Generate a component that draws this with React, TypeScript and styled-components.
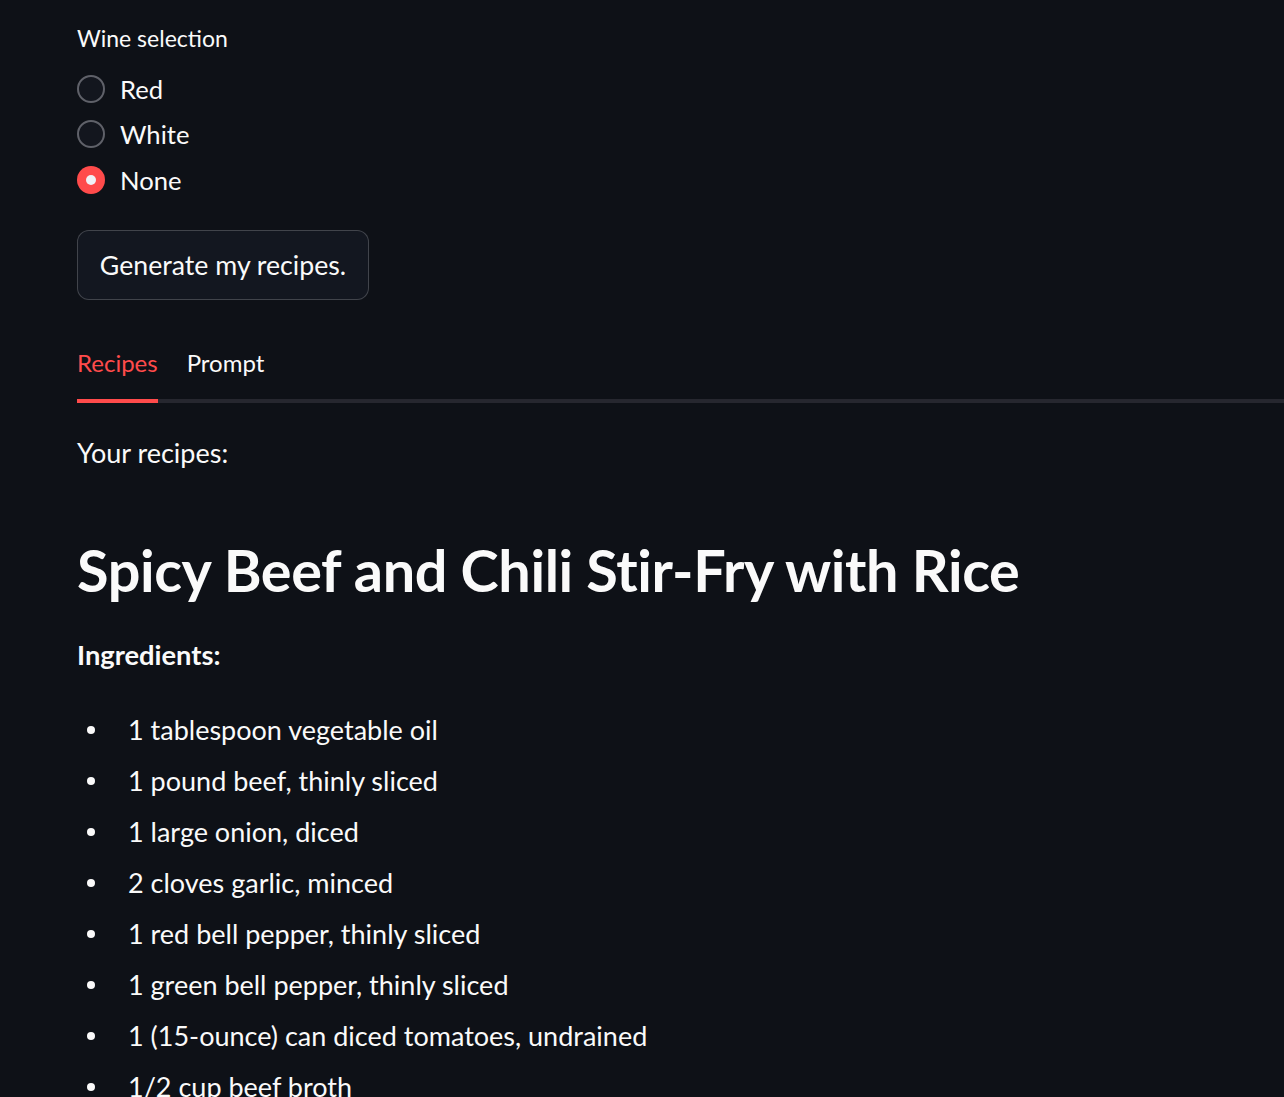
import React, { useState } from 'react';
import styled, { createGlobalStyle } from 'styled-components';

const GlobalStyle = createGlobalStyle`
  html, body {
    margin: 0;
    padding: 0;
    background: #0e1117;
    overflow: hidden;
  }
  body {
    font-family: Lato, "Open Sans", "Liberation Sans", sans-serif;
    color: #fafafa;
  }
`;

const Page = styled.div`
  display: flex;
  flex-direction: column;
  padding: 23px 0 0 77px;
  min-height: 1097px;
  box-sizing: border-box;
`;

const WidgetLabel = styled.div`
  font-size: 23px;
  line-height: 30px;
  height: 30px;
`;

const RadioGroup = styled.div`
  display: flex;
  flex-direction: column;
  margin-top: 13px;
`;

const RadioRow = styled.label`
  display: flex;
  align-items: center;
  height: 45.5px;
  gap: 15px;
  font-size: 25.6px;
  cursor: pointer;
`;

const RadioDot = styled.span<{ checked: boolean }>`
  width: 28px;
  height: 28px;
  box-sizing: border-box;
  border-radius: 50%;
  display: flex;
  align-items: center;
  justify-content: center;
  border: ${(p) => (p.checked ? 'none' : '2px solid #5f6169')};
  background: ${(p) => (p.checked ? '#ff4b4b' : '#13161e')};
  &::after {
    content: '';
    display: ${(p) => (p.checked ? 'block' : 'none')};
    width: 10px;
    height: 10px;
    border-radius: 50%;
    background: #f0f2f6;
  }
`;

const Button = styled.button`
  align-self: flex-start;
  margin-top: 27px;
  width: 292px;
  height: 70px;
  border-radius: 12px;
  border: 1px solid rgba(250, 250, 250, 0.2);
  background: #131720;
  color: #fafafa;
  font-family: inherit;
  font-size: 26.7px;
  padding: 0;
  cursor: pointer;
`;

const TabBar = styled.div`
  display: flex;
  gap: 29px;
  margin-top: 29px;
  border-bottom: 4px solid #26272f;
`;

const Tab = styled.div<{ active: boolean }>`
  height: 70px;
  line-height: 68px;
  font-size: 24px;
  color: ${(p) => (p.active ? '#ff4b4b' : '#fafafa')};
  position: relative;
  cursor: pointer;
  &::after {
    content: '';
    display: ${(p) => (p.active ? 'block' : 'none')};
    position: absolute;
    left: 0;
    right: 0;
    bottom: -4px;
    height: 4px;
    background: #ff4b4b;
  }
`;

const Paragraph = styled.p`
  margin: 33px 0 0;
  font-size: 27px;
  line-height: 34px;
`;

const Heading = styled.h2`
  margin: 65px 0 0;
  font-size: 57.6px;
  font-weight: 700;
  line-height: 70px;
  letter-spacing: -0.4px;
`;

const SubHeading = styled.p`
  margin: 33px 0 0;
  font-size: 27.3px;
  font-weight: 700;
  line-height: 34px;
`;

const List = styled.ul`
  margin: 37px 0 0;
  padding: 0;
  list-style: none;
  font-size: 27px;
`;

const Item = styled.li`
  display: flex;
  align-items: center;
  height: 41px;
  margin-bottom: 10px;
  &::before {
    content: '';
    flex: none;
    width: 8px;
    height: 8px;
    border-radius: 50%;
    background: #fafafa;
    margin: 2px 33px 0 10px;
  }
`;

const ingredients = [
  '1 tablespoon vegetable oil',
  '1 pound beef, thinly sliced',
  '1 large onion, diced',
  '2 cloves garlic, minced',
  '1 red bell pepper, thinly sliced',
  '1 green bell pepper, thinly sliced',
  '1 (15-ounce) can diced tomatoes, undrained',
  '1/2 cup beef broth',
];

export default function App() {
  const [wine, setWine] = useState('None');
  const [tab, setTab] = useState('Recipes');

  return (
    <>
      <GlobalStyle />
      <Page>
        <WidgetLabel>Wine selection</WidgetLabel>
        <RadioGroup>
          {['Red', 'White', 'None'].map((w) => (
            <RadioRow key={w} onClick={() => setWine(w)}>
              <RadioDot checked={wine === w} />
              {w}
            </RadioRow>
          ))}
        </RadioGroup>
        <Button>Generate my recipes.</Button>
        <TabBar>
          {['Recipes', 'Prompt'].map((t) => (
            <Tab key={t} active={tab === t} onClick={() => setTab(t)}>
              {t}
            </Tab>
          ))}
        </TabBar>
        <Paragraph>Your recipes:</Paragraph>
        <Heading>Spicy Beef and Chili Stir-Fry with Rice</Heading>
        <SubHeading>Ingredients:</SubHeading>
        <List>
          {ingredients.map((i) => (
            <Item key={i}>{i}</Item>
          ))}
        </List>
      </Page>
    </>
  );
}
